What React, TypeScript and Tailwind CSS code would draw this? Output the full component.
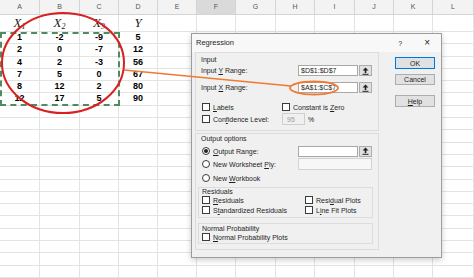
const letters = ["A", "B", "C", "D", "E", "F", "G", "H", "I", "J", "K", "L"];
const heads = [
  ["X", "1"],
  ["X", "2"],
  ["X", "3"],
  ["Y", ""],
];
const data = [
  ["1", "-2", "-9", "5"],
  ["2", "0", "-7", "12"],
  ["4", "2", "-3", "56"],
  ["7", "5", "0", "67"],
  ["8", "12", "2", "80"],
  ["12", "17", "5", "90"],
];
const blankRows = Array.from({ length: 15 }, (_, i) => i);

function Sheet() {
  return (
    <div className="grid grid-cols-[40px_40px_39px_39px_39px_39px_40px_39px_40px_39px_39px_41px]">
      {letters.map((l) => (
        <div
          key={l}
          className={`flex h-[15px] items-end justify-center border-r border-b border-[#d4d4d4] pb-[2px] text-[7px] text-[#555] ${
            l === "F" ? "bg-[#dadada]" : "bg-[#f3f3f3]"
          }`}
        >
          {l}
        </div>
      ))}
      {letters.map((l, i) => (
        <div
          key={"h" + l}
          className="flex h-[17px] items-center justify-center border-r border-b border-[#e3e3e3] font-['Liberation_Serif',serif] text-[13px] italic text-[#222]"
        >
          {heads[i] && (
            <span>
              {heads[i][0]}
              <sub className="text-[8px]">{heads[i][1]}</sub>
            </span>
          )}
        </div>
      ))}
      {data.map((row, r) =>
        letters.map((l, i) => (
          <div
            key={r + l}
            className="flex h-[12.3px] items-center justify-center border-r border-b border-[#e3e3e3] text-[9px] font-bold text-black"
          >
            {row[i] ?? ""}
          </div>
        ))
      )}
      {blankRows.map((r) =>
        letters.map((l) => (
          <div key={"b" + r + l} className="h-[12.3px] border-r border-b border-[#e3e3e3]" />
        ))
      )}
    </div>
  );
}

function Check() {
  return <span className="h-[8px] w-[8px] shrink-0 border border-[#3a3a3a] bg-white" />;
}

function Radio({ on }: { on?: boolean }) {
  return (
    <span className="flex h-[8px] w-[8px] shrink-0 items-center justify-center rounded-full border border-[#3a3a3a] bg-white">
      {on && <span className="h-[4px] w-[4px] rounded-full bg-[#222]" />}
    </span>
  );
}

function Collapse() {
  return (
    <span className="ml-[1px] flex h-[11px] w-[13px] items-center justify-center border border-[#adadad] bg-[#e1e1e1]">
      <svg width="7" height="8" viewBox="0 0 7 8">
        <path d="M3.5 0.5 L6.5 3.6 H4.3 V6 H2.7 V3.6 H0.5 Z" fill="#222" />
        <rect x="0.5" y="6.8" width="6" height="1" fill="#222" />
      </svg>
    </span>
  );
}

function Dialog() {
  return (
    <div className="absolute left-[191px] top-[33px] flex h-[225px] w-[251px] flex-col border border-[#9c9c9c] bg-[#f0f0f0] text-[7px] leading-none text-[#1e1e1e] shadow-[0_2px_6px_rgba(0,0,0,0.2)]">
      <div className="flex h-[18px] items-center bg-[#f8f8f8] pl-[4px] pr-[11px]">
        <span className="text-[7.5px]">Regression</span>
        <span className="ml-auto">?</span>
        <span className="ml-[22px] text-[10px] font-light">×</span>
      </div>
      <div className="flex pl-[3px]">
        <div className="flex w-[184px] flex-col">
          <div className="flex h-[79px] flex-col border border-[#dcdcdc] pl-[5px]">
            <div className="mt-[1px] flex h-[10px] items-center">Input</div>
            <div className="flex h-[13px] items-center">
              <span className="w-[97px]">
                Input <u>Y</u> Range:
              </span>
              <span className="flex h-[11px] w-[60px] items-center border border-[#a8a8a8] bg-white pl-[2px]">$D$1:$D$7</span>
              <Collapse />
            </div>
            <div className="mt-[4px] flex h-[13px] items-center">
              <span className="w-[97px]">
                Input <u>X</u> Range:
              </span>
              <span className="flex h-[11px] w-[60px] items-center border border-[#a8a8a8] bg-white pl-[2px]">$A$1:$C$7</span>
              <Collapse />
            </div>
            <div className="mt-[7px] flex h-[12px] items-center pl-[1px]">
              <span className="flex w-[80px] items-center gap-[3px]">
                <Check />
                <span>
                  <u>L</u>abels
                </span>
              </span>
              <span className="flex items-center gap-[3px]">
                <Check />
                <span>
                  Constant is <u>Z</u>ero
                </span>
              </span>
            </div>
            <div className="flex h-[12px] items-center pl-[1px]">
              <span className="flex w-[80px] items-center gap-[3px]">
                <Check />
                <span>
                  Con<u>f</u>idence Level:
                </span>
              </span>
              <span className="flex h-[12px] w-[23px] items-center border border-[#cfcfcf] pl-[4px] text-[#9a9a9a]">95</span>
              <span className="ml-[3px]">%</span>
            </div>
          </div>

          <div className="mt-[2px] flex h-[117px] flex-col border border-[#dcdcdc] px-[2px]">
            <div className="flex h-[9px] items-center pl-[3px]">Output options</div>
            <div className="mt-[2px] flex h-[12px] items-center pl-[4px]">
              <span className="flex w-[96px] items-center gap-[3px]">
                <Radio on />
                <span>
                  <u>O</u>utput Range:
                </span>
              </span>
              <span className="h-[11px] w-[60px] border border-[#a8a8a8] bg-white" />
              <Collapse />
            </div>
            <div className="mt-[1px] flex h-[12px] items-center pl-[4px]">
              <span className="flex w-[96px] items-center gap-[3px]">
                <Radio />
                <span>
                  New Worksheet <u>P</u>ly:
                </span>
              </span>
              <span className="h-[12px] w-[74px] border border-[#d2d2d2] bg-[#f7f7f7]" />
            </div>
            <div className="mt-[2px] flex h-[12px] items-center pl-[4px]">
              <span className="flex items-center gap-[3px]">
                <Radio />
                <span>
                  New <u>W</u>orkbook
                </span>
              </span>
            </div>
            <div className="mt-[3px] flex w-[175px] flex-col border border-[#dcdcdc] pb-[2px] pl-[3px]">
              <div className="flex h-[7px] items-center">Residuals</div>
              <div className="flex h-[10px] items-center">
                <span className="flex w-[103px] items-center gap-[3px]">
                  <Check />
                  <span>
                    <u>R</u>esiduals
                  </span>
                </span>
                <span className="flex items-center gap-[3px]">
                  <Check />
                  <span>
                    Resi<u>d</u>ual Plots
                  </span>
                </span>
              </div>
              <div className="flex h-[10px] items-center">
                <span className="flex w-[103px] items-center gap-[3px]">
                  <Check />
                  <span>
                    S<u>t</u>andardized Residuals
                  </span>
                </span>
                <span className="flex items-center gap-[3px]">
                  <Check />
                  <span>
                    L<u>i</u>ne Fit Plots
                  </span>
                </span>
              </div>
            </div>
            <div className="mt-[5px] flex w-[175px] flex-col border border-[#dcdcdc] pb-[1px] pl-[3px]">
              <div className="flex h-[8px] items-center">Normal Probability</div>
              <div className="flex h-[10px] items-center gap-[3px]">
                <Check />
                <span>
                  <u>N</u>ormal Probability Plots
                </span>
              </div>
            </div>
          </div>
        </div>

        <div className="ml-[16px] flex w-[40px] flex-col">
          <div className="mt-[5px] flex h-[12px] items-center justify-center border border-[#0078d7] bg-[#e1e1e1] shadow-[inset_0_0_0_1px_#cfe3f5]">
            OK
          </div>
          <div className="mt-[5px] flex h-[11px] items-center justify-center border border-[#adadad] bg-[#e1e1e1]">
            Cancel
          </div>
          <div className="mt-[10px] flex h-[12px] items-center justify-center border border-[#adadad] bg-[#e1e1e1]">
            <span>
              <u>H</u>elp
            </span>
          </div>
        </div>
      </div>
    </div>
  );
}

export default function App() {
  return (
    <div className="relative h-[278px] w-[474px] overflow-hidden bg-white font-['Liberation_Sans',Arial,sans-serif]">
      <Sheet />
      {/* copy marquee round A2:C7 */}
      <div className="absolute left-0 top-[32px] h-[74px] w-[120px] border-2 border-dashed border-[#4e8b5f]" />
      <Dialog />
      <svg className="pointer-events-none absolute inset-0" width="474" height="278" viewBox="0 0 474 278">
        <ellipse cx="63" cy="63" rx="61" ry="50" fill="none" stroke="#d91f1f" strokeWidth="2" />
        <line x1="124" y1="70" x2="291" y2="86" stroke="#ee7b2f" strokeWidth="1.6" />
        <ellipse cx="314" cy="88" rx="24" ry="6.5" fill="none" stroke="#ee7b2f" strokeWidth="1.8" />
      </svg>
    </div>
  );
}
